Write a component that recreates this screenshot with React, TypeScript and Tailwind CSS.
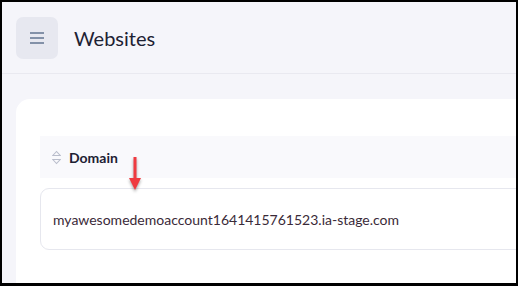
import React from "react";

export default function App() {
  return (
    <div className="w-[518px] h-[286px] bg-black pt-[2px] pl-[2px] pr-[2px] pb-[3px]" style={{ fontFamily: "Lato, 'Open Sans', sans-serif" }}>
      <div className="relative w-full h-full bg-[#f5f5fa] flex flex-col overflow-hidden">
        <div className="h-[72px] shrink-0 border-b border-[#e9e9f0] flex items-center pl-[14px] gap-4">
          <button className="w-[42px] h-[42px] rounded-[7px] bg-[#e7e8f0] flex flex-col items-center justify-center gap-[3px]">
            <span className="block w-[14px] h-[2px] bg-[#8391a8]" />
            <span className="block w-[14px] h-[2px] bg-[#8391a8]" />
            <span className="block w-[14px] h-[2px] bg-[#8391a8]" />
          </button>
          <h1 className="text-[20px] text-[#1d2133] leading-none">Websites</h1>
        </div>
        <div className="flex-1 pt-[25px] pl-[14px]">
          <div className="w-[600px] h-full bg-white rounded-tl-[14px] pt-[37px] pl-[24px]">
            <div className="h-[42px] bg-[#f9f9fc] flex items-center pl-[12px] gap-[8px]">
              <svg width="9" height="17" viewBox="0 0 9 17" fill="none" stroke="#b9bdcb" strokeWidth="1.1">
                <path d="M0.8 6.5 L4.5 2.5 L8.2 6.5 Z" />
                <path d="M0.8 10.5 L4.5 14.5 L8.2 10.5 Z" />
              </svg>
              <span className="text-[14px] font-bold text-[#1d2133]">Domain</span>
            </div>
            <div className="mt-[10px] h-[62px] border border-[#e6e7ee] rounded-[9px] flex items-center pl-[12px]">
              <span className="text-[14px] text-[#3a2a38]">myawesomedemoaccount1641415761523.ia-stage.com</span>
            </div>
          </div>
        </div>
        <svg className="absolute left-[124px] top-[154px]" width="18" height="38" viewBox="0 0 18 38" style={{ filter: "drop-shadow(0px 2px 1.5px rgba(0,0,0,0.35))" }}>
          <rect x="7.5" y="1" width="3" height="23" fill="#ef3a40" />
          <path d="M3 22 L15 22 L9 34 Z" fill="#ef3a40" />
        </svg>
      </div>
    </div>
  );
}
